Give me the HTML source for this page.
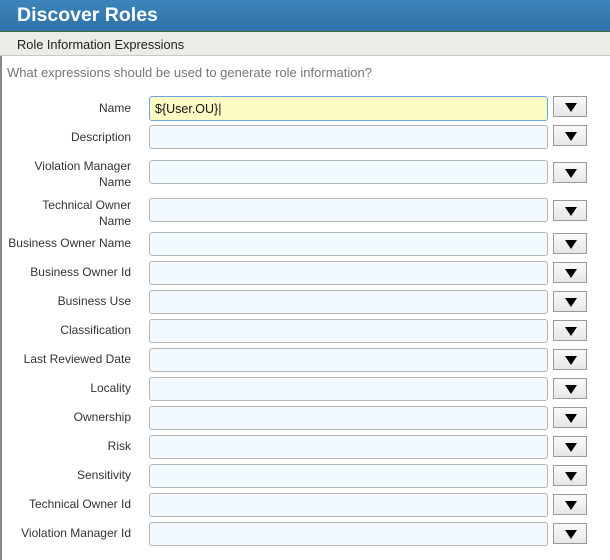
<!DOCTYPE html>
<html><head><style>
body{margin:0;width:610px;height:560px;background:#fff;font-family:"Liberation Sans",sans-serif;position:relative;overflow:hidden}
.hdr{position:absolute;left:0;top:0;width:610px;height:31px;background:linear-gradient(#3c84bb,#2f72a9);border-bottom:1px solid #3f6a3a}
.hdr span{position:absolute;left:17px;top:4px;color:#fff;font-weight:bold;font-size:19.5px}
.sub{position:absolute;left:0;top:32px;width:610px;height:23px;background:#edebe6;border-bottom:1px solid #c8c8c8}
.sub span{position:absolute;left:17px;top:5px;font-size:12.8px;color:#222}
.q{position:absolute;left:7px;top:65px;font-size:13px;color:#777}
.lb{position:absolute;left:0;top:56px;width:2px;height:504px;background:#8a8a8a}
.l{position:absolute;right:479px;font-size:12px;color:#333;text-align:right;line-height:16px}
.i{position:absolute;left:149px;width:399px;height:24px;border:1px solid #b5b5b5;border-radius:3px;background:#f2faff;box-sizing:border-box}
.b{position:absolute;left:553px;width:34px;height:21px;border:1px solid #9a9a9a;background:linear-gradient(#fafafa,#e6e6e6);box-sizing:border-box}
.b:after{content:"";position:absolute;left:11px;top:6px;border-left:6px solid transparent;border-right:6px solid transparent;border-top:9px solid #000}
</style></head><body>
<div class="hdr"><span>Discover Roles</span></div>
<div class="sub"><span>Role Information Expressions</span></div>
<div class="lb"></div>
<div class="q">What expressions should be used to generate role information?</div>

<div class="l" style="top:100px">Name</div>
<div class="i" style="top:96px;height:25px;background:#fdfbc4;border-color:#6aa7e0;font-size:12.5px;padding:5px 5px;color:#111">${User.OU}|</div>
<div class="b" style="top:96px"></div>

<div class="l" style="top:129px">Description</div><div class="i" style="top:125px"></div><div class="b" style="top:125px"></div>
<div class="l" style="top:158px">Violation Manager<br>Name</div><div class="i" style="top:160px"></div><div class="b" style="top:162px"></div>
<div class="l" style="top:197px">Technical Owner<br>Name</div><div class="i" style="top:198px"></div><div class="b" style="top:200px"></div>
<div class="l" style="top:235px">Business Owner Name</div><div class="i" style="top:232px"></div><div class="b" style="top:233px"></div>
<div class="l" style="top:264px">Business Owner Id</div><div class="i" style="top:261px"></div><div class="b" style="top:262px"></div>
<div class="l" style="top:293px">Business Use</div><div class="i" style="top:290px"></div><div class="b" style="top:291px"></div>
<div class="l" style="top:322px">Classification</div><div class="i" style="top:319px"></div><div class="b" style="top:320px"></div>
<div class="l" style="top:351px">Last Reviewed Date</div><div class="i" style="top:348px"></div><div class="b" style="top:349px"></div>
<div class="l" style="top:380px">Locality</div><div class="i" style="top:377px"></div><div class="b" style="top:378px"></div>
<div class="l" style="top:409px">Ownership</div><div class="i" style="top:406px"></div><div class="b" style="top:407px"></div>
<div class="l" style="top:438px">Risk</div><div class="i" style="top:435px"></div><div class="b" style="top:436px"></div>
<div class="l" style="top:467px">Sensitivity</div><div class="i" style="top:464px"></div><div class="b" style="top:465px"></div>
<div class="l" style="top:496px">Technical Owner Id</div><div class="i" style="top:493px"></div><div class="b" style="top:494px"></div>
<div class="l" style="top:525px">Violation Manager Id</div><div class="i" style="top:522px"></div><div class="b" style="top:523px"></div>
</body></html>
